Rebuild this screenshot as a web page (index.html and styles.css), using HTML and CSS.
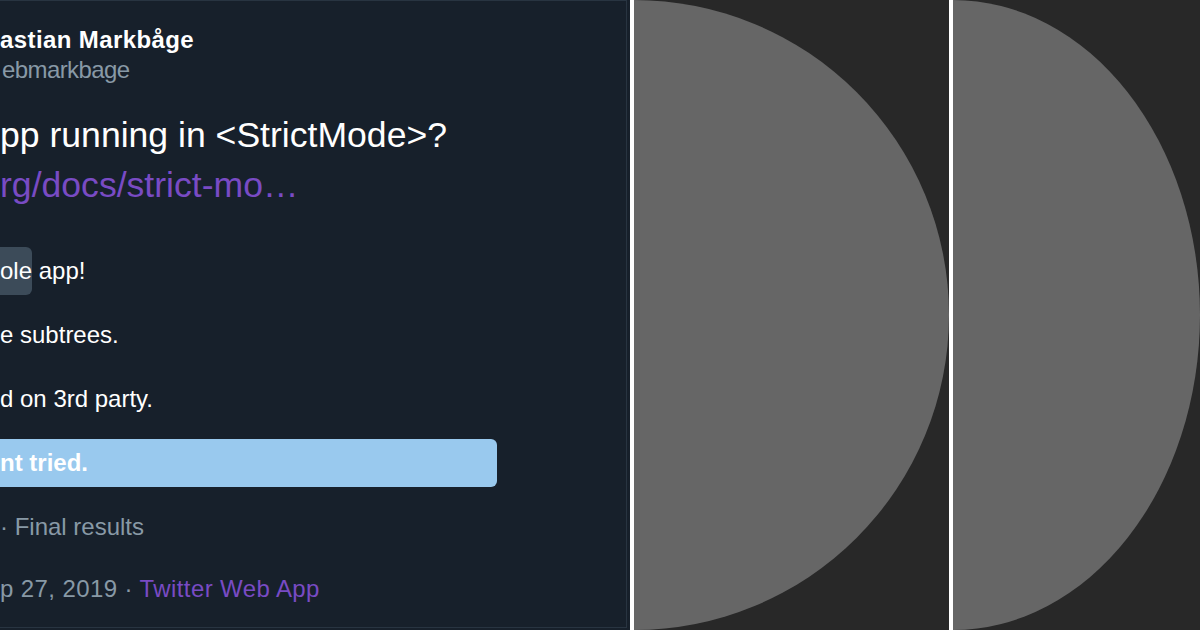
FILE: index.html
```html
<!DOCTYPE html>
<html lang="en">
<head>
<meta charset="utf-8">
<title>Tweet poll preview</title>
<link rel="stylesheet" href="styles.css">
</head>
<body>
<div class="frame">
  <section class="tweet-pane">
    <div class="card">
      <div class="author">
        <div class="name">astian Markbåge</div>
        <div class="handle">ebmarkbage</div>
      </div>
      <p class="text">pp running in &lt;StrictMode&gt;?<br><a class="link">rg/docs/strict-mo…</a></p>
      <ul class="poll">
        <li class="option"><span class="bar" style="width:32px"></span><span class="label">ole app!</span></li>
        <li class="option"><span class="bar" style="width:0px"></span><span class="label">e subtrees.</span></li>
        <li class="option"><span class="bar" style="width:0px"></span><span class="label">d on 3rd party.</span></li>
        <li class="option option-win"><span class="bar bar-win" style="width:497px"></span><span class="label">nt tried.</span></li>
      </ul>
      <div class="votes">· Final results</div>
      <div class="meta">p 27, 2019 · <a class="link">Twitter Web App</a></div>
    </div>
  </section>
  <section class="shape-pane"><div class="half"></div></section>
  <section class="shape-pane"><div class="half"></div></section>
</div>
</body>
</html>
```
FILE: styles.css
```css
html, body {
  margin: 0;
  padding: 0;
}
body {
  width: 1200px;
  height: 630px;
  overflow: hidden;
  background: #282828;
  font-family: "Liberation Sans", Arial, sans-serif;
}
.frame {
  display: grid;
  grid-template-columns: 630px 315px 247px;
  column-gap: 4px;
  height: 630px;
  background: #ffffff;
}
.tweet-pane {
  background: #17202b;
  overflow: hidden;
}
.card {
  box-sizing: border-box;
  height: 628px;
  margin-right: 3px;
  border: 1px solid #283441;
  border-left: none;
  padding-top: 24px;
  white-space: nowrap;
}
.name {
  font-weight: 700;
  font-size: 24px;
  line-height: 30px;
  letter-spacing: 0.4px;
  color: #ffffff;
}
.handle {
  font-size: 24px;
  line-height: 30px;
  letter-spacing: -0.6px;
  color: #8899a6;
  margin-left: 2px;
}
.text {
  margin: 25px 0 0;
  font-size: 35.6px;
  line-height: 50px;
  color: #ffffff;
}
.link {
  color: #794bc4;
  text-decoration: none;
}
.poll {
  list-style: none;
  margin: 37px 0 0;
  padding: 0;
  width: 497px;
  display: flex;
  flex-direction: column;
  gap: 16px;
}
.option {
  position: relative;
  height: 48px;
  display: flex;
  align-items: center;
  font-size: 24px;
  color: #ffffff;
}
.bar {
  position: absolute;
  left: 0;
  top: 0;
  bottom: 0;
  border-radius: 0 6px 6px 0;
  background: #3c4b59;
}
.bar-win {
  background: #99c9ee;
}
.label {
  position: relative;
}
.option-win .label {
  font-weight: 700;
}
.votes {
  margin-top: 25px;
  font-size: 24px;
  line-height: 30px;
  color: #8899a6;
}
.meta {
  margin-top: 32px;
  font-size: 24px;
  line-height: 30px;
  letter-spacing: 0.4px;
  color: #8899a6;
}
.shape-pane {
  background: #282828;
  overflow: hidden;
}
.half {
  height: 100%;
  background: #666666;
  border-radius: 0 100% 100% 0 / 0 50% 50% 0;
}
```
